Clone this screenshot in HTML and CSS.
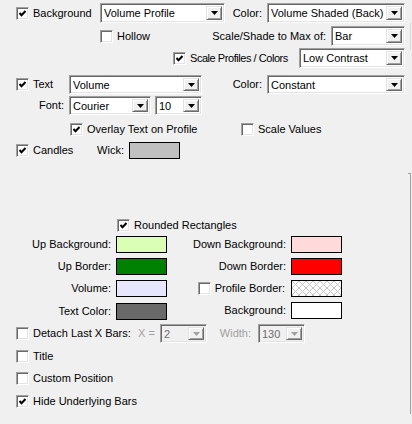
FILE: index.html
```html
<!DOCTYPE html>
<html>
<head>
<meta charset="utf-8">
<link rel="stylesheet" href="styles.css">
</head>
<body>
<div class="panel">
  <div class="row r1">
    <span class="cb on"><svg viewBox="0 0 7 7" width="7" height="7"><polyline points="0.5,3 2.5,5.2 6.5,1" /></svg></span>
    <span class="lbl w-bg">Background</span>
    <div class="dd w125"><span class="val">Volume Profile</span><span class="btn"><svg width="7" height="4" viewBox="0 0 7 4"><polygon points="0,0 7,0 3.5,4"/></svg></span></div>
    <span class="lbl ra w-col1">Color:</span>
    <div class="dd w138"><span class="val">Volume Shaded (Back)</span><span class="btn"><svg width="7" height="4" viewBox="0 0 7 4"><polygon points="0,0 7,0 3.5,4"/></svg></span></div>
  </div>

  <div class="row r2">
    <span class="cb"></span>
    <span class="lbl w-hollow">Hollow</span>
    <span class="lbl ra w-scale">Scale/Shade to Max of:</span>
    <div class="dd w74"><span class="val">Bar</span><span class="btn"><svg width="7" height="4" viewBox="0 0 7 4"><polygon points="0,0 7,0 3.5,4"/></svg></span></div>
  </div>

  <div class="row r3">
    <span class="cb on"><svg viewBox="0 0 7 7" width="7" height="7"><polyline points="0.5,3 2.5,5.2 6.5,1" /></svg></span>
    <span class="lbl w-prof">Scale Profiles / Colors</span>
    <div class="dd w106"><span class="val">Low Contrast</span><span class="btn"><svg width="7" height="4" viewBox="0 0 7 4"><polygon points="0,0 7,0 3.5,4"/></svg></span></div>
  </div>

  <div class="row r4">
    <span class="cb on"><svg viewBox="0 0 7 7" width="7" height="7"><polyline points="0.5,3 2.5,5.2 6.5,1" /></svg></span>
    <span class="lbl w-text">Text</span>
    <div class="dd w133"><span class="val">Volume</span><span class="btn"><svg width="7" height="4" viewBox="0 0 7 4"><polygon points="0,0 7,0 3.5,4"/></svg></span></div>
    <span class="lbl ra w-col2">Color:</span>
    <div class="dd w138"><span class="val">Constant</span><span class="btn"><svg width="7" height="4" viewBox="0 0 7 4"><polygon points="0,0 7,0 3.5,4"/></svg></span></div>
  </div>

  <div class="row r5">
    <span class="lbl ra w-font">Font:</span>
    <div class="dd w82"><span class="val">Courier</span><span class="btn"><svg width="7" height="4" viewBox="0 0 7 4"><polygon points="0,0 7,0 3.5,4"/></svg></span></div>
    <div class="dd w47 ml4"><span class="val">10</span><span class="btn"><svg width="7" height="4" viewBox="0 0 7 4"><polygon points="0,0 7,0 3.5,4"/></svg></span></div>
  </div>

  <div class="row r6">
    <span class="cb on"><svg viewBox="0 0 7 7" width="7" height="7"><polyline points="0.5,3 2.5,5.2 6.5,1" /></svg></span>
    <span class="lbl w-overlay">Overlay Text on Profile</span>
    <span class="cb"></span>
    <span class="lbl">Scale Values</span>
  </div>

  <div class="row r7">
    <span class="cb on"><svg viewBox="0 0 7 7" width="7" height="7"><polyline points="0.5,3 2.5,5.2 6.5,1" /></svg></span>
    <span class="lbl w-candles">Candles</span>
    <span class="lbl ra w-wick">Wick:</span>
    <span class="sw c-wick"></span>
  </div>

  <div class="row r8">
    <span class="cb on"><svg viewBox="0 0 7 7" width="7" height="7"><polyline points="0.5,3 2.5,5.2 6.5,1" /></svg></span>
    <span class="lbl">Rounded Rectangles</span>
  </div>

  <div class="row sr r9">
    <span class="lbl ra w-left">Up Background:</span>
    <span class="sw c-upbg"></span>
    <span class="lbl ra w-right">Down Background:</span>
    <span class="sw c-dnbg"></span>
  </div>

  <div class="row sr r10">
    <span class="lbl ra w-left">Up Border:</span>
    <span class="sw c-upbd"></span>
    <span class="lbl ra w-right">Down Border:</span>
    <span class="sw c-dnbd"></span>
  </div>

  <div class="row sr r11">
    <span class="lbl ra w-left">Volume:</span>
    <span class="sw c-vol"></span>
    <span class="w-right pb">
      <span class="cb"></span>
      <span class="lbl">Profile Border:</span>
    </span>
    <span class="sw c-pb"></span>
  </div>

  <div class="row sr r12">
    <span class="lbl ra w-left txc">Text Color:</span>
    <span class="sw c-txt txc"></span>
    <span class="lbl ra w-right">Background:</span>
    <span class="sw c-bg"></span>
  </div>

  <div class="row r13">
    <span class="cb"></span>
    <span class="lbl w-detach">Detach Last X Bars:</span>
    <span class="lbl dis w-x">X =</span>
    <div class="dd w47 disabled"><span class="val">2</span><span class="btn"><svg width="7" height="4" viewBox="0 0 7 4"><polygon points="0,0 7,0 3.5,4"/></svg></span></div>
    <span class="lbl dis ra w-width">Width:</span>
    <div class="dd w47 disabled"><span class="val">130</span><span class="btn"><svg width="7" height="4" viewBox="0 0 7 4"><polygon points="0,0 7,0 3.5,4"/></svg></span></div>
  </div>

  <div class="row r14">
    <span class="cb"></span>
    <span class="lbl">Title</span>
  </div>

  <div class="row r15">
    <span class="cb"></span>
    <span class="lbl">Custom Position</span>
  </div>

  <div class="row r16">
    <span class="cb on"><svg viewBox="0 0 7 7" width="7" height="7"><polyline points="0.5,3 2.5,5.2 6.5,1" /></svg></span>
    <span class="lbl">Hide Underlying Bars</span>
  </div>

  <span class="edge-top"></span>
  <span class="edge"></span>
</div>
</body>
</html>
```

FILE: styles.css
```css
html, body {
  margin: 0;
  padding: 0;
  background: #f0f0f0;
}

.panel {
  position: relative;
  width: 412px;
  height: 424px;
  overflow: hidden;
  background: #f0f0f0;
  font-family: "Liberation Sans", Arial, sans-serif;
  font-size: 11px;
  color: #000;
  display: flex;
  flex-direction: column;
}

.row {
  display: flex;
  align-items: center;
  flex: none;
  white-space: nowrap;
}

.lbl {
  display: inline-block;
  flex: none;
  margin-left: 4px;
  line-height: 13px;
}
.ra {
  text-align: right;
  padding-right: 5px;
  margin-left: 0;
  box-sizing: border-box;
}
.dis { color: #a0a0a0; }

/* checkbox */
.cb {
  flex: none;
  box-sizing: border-box;
  width: 13px;
  height: 13px;
  background: #fff;
  border: 1px solid;
  border-color: #a0a0a0 #ffffff #ffffff #a0a0a0;
  box-shadow: inset 1px 1px 0 #696969, inset -1px -1px 0 #e3e3e3;
  display: flex;
  align-items: center;
  justify-content: center;
}
.cb svg {
  display: block;
  fill: none;
  stroke: #000;
  stroke-width: 2;
}

/* dropdown */
.dd {
  flex: none;
  box-sizing: border-box;
  height: 20px;
  background: #fff;
  border: 1px solid;
  border-color: #a0a0a0 #ffffff #ffffff #a0a0a0;
  box-shadow: inset 1px 1px 0 #696969, inset -1px -1px 0 #e3e3e3;
  display: flex;
  align-items: stretch;
  padding: 2px;
}
.dd .val {
  flex: 1;
  padding-left: 1px;
  display: flex;
  align-items: center;
  overflow: hidden;
}
.dd .btn {
  flex: none;
  box-sizing: border-box;
  width: 16px;
  background: #f0f0f0;
  border: 1px solid;
  border-color: #e3e3e3 #696969 #696969 #e3e3e3;
  box-shadow: inset 1px 1px 0 #ffffff, inset -1px -1px 0 #a0a0a0;
  display: flex;
  align-items: center;
  justify-content: center;
}
.dd .btn svg { display: block; fill: #000; }
.dd.disabled { background: #f0f0f0; }
.dd.disabled .val { color: #6d6d6d; }
.dd.disabled .btn svg { fill: #a0a0a0; }

.w125 { width: 125px; }
.w138 { width: 138px; }
.w74 { width: 74px; }
.w106 { width: 106px; }
.w133 { width: 133px; }
.w82 { width: 82px; }
.w47 { width: 47px; height: 19px; }
.ml4 { margin-left: 4px; }

/* swatches */
.sw {
  flex: none;
  box-sizing: border-box;
  width: 51px;
  height: 17px;
  border: 1px solid #000;
}
.c-wick { background: #c0c0c0; }
.c-upbg { background: #daffb4; }
.c-dnbg { background: #ffdada; }
.c-upbd { background: #008000; }
.c-dnbd { background: #ff0000; }
.c-vol { background: #e6e6ff; }
.c-txt { background: #696969; }
.c-bg { background: #ffffff; }
.c-pb {
  background-color: #fff;
  background-image:
    repeating-linear-gradient(45deg, #c4c4c4 0 1px, transparent 1px 5px),
    repeating-linear-gradient(-45deg, #c4c4c4 0 1px, transparent 1px 5px);
}
.txc { position: relative; top: 1px; }

/* rows: vertical placement */
.r1 { margin-top: 3px; height: 20px; padding-left: 16px; }
.r2 { margin-top: 3px; height: 20px; padding-left: 100px; }
.r3 { margin-top: 2px; height: 20px; padding-left: 173px; }
.r4 { margin-top: 7px; height: 19px; padding-left: 16px; }
.r4 .dd, .r5 .dd { height: 19px; }
.r5 { margin-top: 2px; height: 19px; }
.r6 { margin-top: 5px; height: 18px; padding-left: 70px; }
.r7 { margin-top: 4px; height: 17px; padding-left: 16px; }
.r8 { margin-top: 57px; height: 18px; padding-left: 117px; }
.r9 { margin-top: 2px; }
.r10, .r11 { margin-top: 5px; }
.r12 { margin-top: 5px; }
.sr { height: 17px; }
.r13 { margin-top: 5px; height: 19px; padding-left: 16px; }
.r14 { margin-top: 4px; height: 18px; padding-left: 16px; }
.r15 { margin-top: 4px; height: 18px; padding-left: 16px; }
.r16 { margin-top: 5px; height: 18px; padding-left: 16px; }

/* horizontal widths */
.w-bg { width: 67px; }
.w-col1 { width: 42px; }
.w-hollow { width: 60px; }
.w-scale { width: 154px; }
.w-prof { width: 109px; letter-spacing: -0.45px; }
.w-text { width: 36px; }
.w-col2 { width: 65px; }
.w-font { width: 69px; }
.w-overlay { width: 154px; }
.w-candles { width: 60px; }
.w-wick { width: 36px; }
.w-left { width: 116px; }
.w-right { width: 124px; }
.w-detach { width: 105px; }
.w-x { width: 22px; margin-left: 0; }
.w-width { width: 51px; padding-right: 7px; }

.pb {
  flex: none;
  display: flex;
  align-items: center;
  justify-content: flex-end;
  padding-right: 6px;
  box-sizing: border-box;
}

/* right-hand window edge */
.edge {
  position: absolute;
  left: 410px;
  top: 173px;
  width: 1px;
  height: 241px;
  background: #a0a0a0;
}
.edge::before {
  content: "";
  position: absolute;
  left: -2px;
  top: 0;
  width: 2px;
  height: 1px;
  background: #a0a0a0;
}
.edge-top {
  position: absolute;
  left: 410px;
  top: 23px;
  width: 1px;
  height: 27px;
  background: #d8d8d8;
}
```
